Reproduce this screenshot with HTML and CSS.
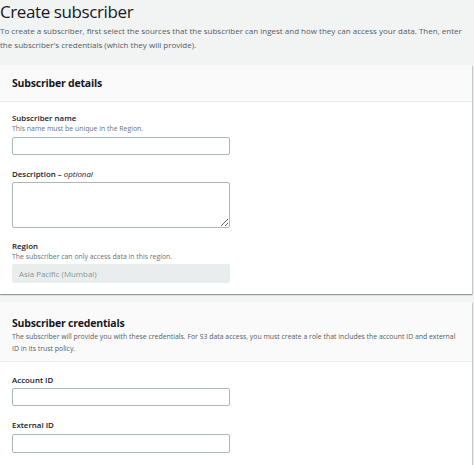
FILE: index.html
```html
<!DOCTYPE html>
<html lang="en">
<head>
<meta charset="utf-8">
<title>Create subscriber</title>
<link rel="stylesheet" href="styles.css">
</head>
<body>
<main class="page">
  <header class="page-head">
    <h1 class="title">Create subscriber</h1>
    <p class="intro">To create a subscriber, first select the sources that the subscriber can ingest and how they can access your data. Then, enter the subscriber's credentials (which they will provide).</p>
  </header>

  <section class="card">
    <div class="card-header">
      <h2 class="card-title">Subscriber details</h2>
    </div>
    <div class="card-body">
      <div class="field">
        <label class="label" for="name">Subscriber name</label>
        <div class="hint">This name must be unique in the Region.</div>
        <input class="input" id="name" type="text">
      </div>
      <div class="field field-gap">
        <label class="label" for="desc">Description – <i>optional</i></label>
        <textarea class="input textarea" id="desc"></textarea>
      </div>
      <div class="field field-gap-sm">
        <label class="label" for="region">Region</label>
        <div class="hint">The subscriber can only access data in this region.</div>
        <input class="input input-disabled" id="region" type="text" value="Asia Pacific (Mumbai)" disabled>
      </div>
    </div>
  </section>

  <section class="card card-second">
    <div class="card-header card-header-tall">
      <h2 class="card-title">Subscriber credentials</h2>
      <p class="card-desc">The subscriber will provide you with these credentials. For S3 data access, you must create a role that includes the account ID and external ID in its trust policy.</p>
    </div>
    <div class="card-body card-body-second">
      <div class="field">
        <label class="label" for="acct">Account ID</label>
        <input class="input input-tight" id="acct" type="text">
      </div>
      <div class="field field-gap">
        <label class="label" for="ext">External ID</label>
        <input class="input input-tall" id="ext" type="text">
      </div>
    </div>
  </section>
</main>
</body>
</html>
```

FILE: styles.css
```css
* { box-sizing: border-box; }

html, body {
  margin: 0;
  padding: 0;
  background: #f2f3f3;
  font-family: "Open Sans", "Noto Sans", sans-serif;
  color: #16191f;
}

.page {
  width: 472px;
}

.title {
  margin: 0;
  font-size: 17px;
  line-height: 24px;
  font-weight: 400;
  letter-spacing: -0.4px;
  color: #16191f;
}

.intro {
  margin: 0;
  font-size: 8px;
  line-height: 14px;
  color: #545b64;
}

.card {
  margin-top: 13px;
  background: #ffffff;
  box-shadow: 0 1px 1px 0 rgba(0, 28, 36, 0.3), 1px 1px 1px 0 rgba(0, 28, 36, 0.15);
}

.card-second {
  margin-top: 8px;
}

.card-header {
  height: 37px;
  padding: 0 12px;
  background: #fafafa;
  border-bottom: 1px solid #eaeded;
  display: flex;
  flex-direction: column;
  justify-content: center;
}

.card-header-tall {
  height: 60px;
  justify-content: flex-start;
  padding-top: 14px;
}

.card-title {
  margin: 0;
  font-size: 10.5px;
  line-height: 14px;
  font-weight: 700;
  letter-spacing: -0.2px;
  color: #16191f;
}

.card-desc {
  margin: 1px 0 0;
  font-size: 6.9px;
  line-height: 12px;
  color: #545b64;
}

.card-body {
  padding: 10px 12px 11px;
}

.card-body-second {
  padding: 12px 12px 12px;
}

.field {
  display: flex;
  flex-direction: column;
  align-items: flex-start;
}

.field-gap { margin-top: 13px; }
.field-gap-sm { margin-top: 12px; }

.label {
  font-size: 7.9px;
  line-height: 12px;
  font-weight: 600;
  color: #16191f;
}

.label i {
  font-weight: 400;
  font-style: italic;
}

.hint {
  font-size: 6.9px;
  line-height: 10px;
  color: #687078;
}

.input {
  display: block;
  width: 218px;
  height: 18px;
  margin: 3px 0 0;
  padding: 0 6px;
  border: 1px solid #aab7b8;
  border-radius: 2px;
  background: #ffffff;
  font-family: "Open Sans", "Noto Sans", sans-serif;
  font-size: 7.9px;
  color: #16191f;
  outline: none;
}

.input-tight { margin-top: 2px; }
.input-tall { height: 19px; }

.textarea {
  height: 46px;
  margin-top: 2px;
  resize: vertical;
}

.input-disabled {
  height: 19px;
  margin-top: 2px;
  border-color: #eaeded;
  background: #eaeded;
  color: #879596;
  -webkit-text-fill-color: #879596;
}
```
